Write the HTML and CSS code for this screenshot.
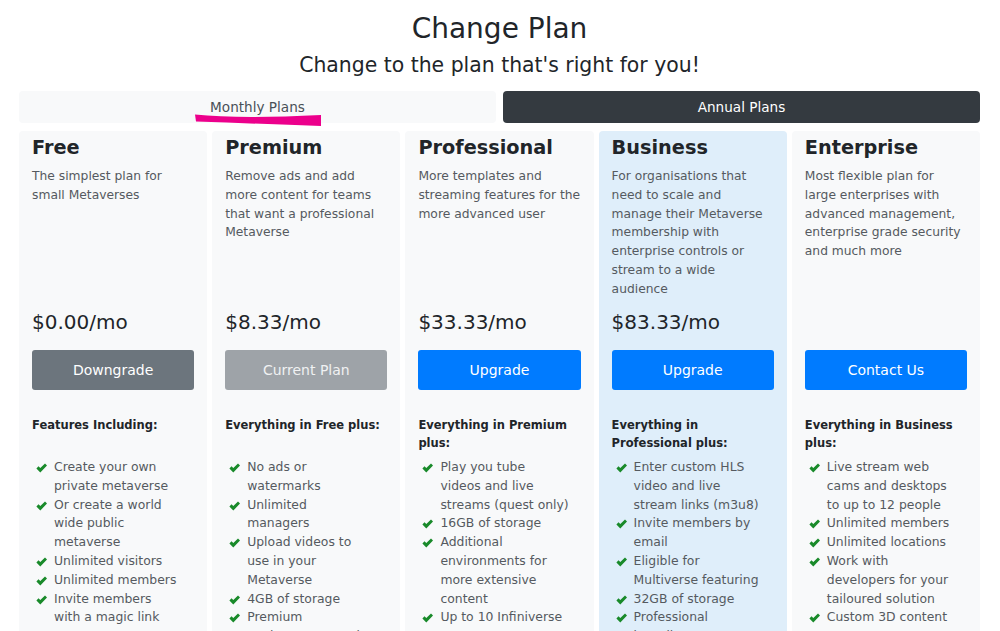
FILE: index.html
```html
<!DOCTYPE html>
<html>
<head>
<meta charset="utf-8">
<link rel="stylesheet" href="styles.css">
</head>
<body>
<div class="page">
  <h1 class="title">Change Plan</h1>
  <p class="subtitle">Change to the plan that's right for you!</p>
  <div class="tabs">
    <div class="tab tab-monthly">Monthly Plans
      <svg class="scribble" width="128" height="14" viewBox="0 0 128 14"><path d="M1,1.5 Q45,6 127,2 L127,13 Q70,11 2,8.5 Z" fill="#ec008c"/></svg>
    </div>
    <div class="tab tab-annual">Annual Plans</div>
  </div>
  <div class="cards">
    <div class="card">
      <h2 class="plan">Free</h2>
      <p class="desc">The simplest plan for<br>small Metaverses</p>
      <div class="price">$0.00/mo</div>
      <div class="btn btn-dark">Downgrade</div>
      <h3 class="feat-head">Features Including:</h3>
      <ul class="feats">
        <li>Create your own<br>private metaverse</li>
        <li>Or create a world<br>wide public<br>metaverse</li>
        <li>Unlimited visitors</li>
        <li>Unlimited members</li>
        <li>Invite members<br>with a magic link</li>
      </ul>
    </div>
    <div class="card">
      <h2 class="plan">Premium</h2>
      <p class="desc">Remove ads and add<br>more content for teams<br>that want a professional<br>Metaverse</p>
      <div class="price">$8.33/mo</div>
      <div class="btn btn-muted">Current Plan</div>
      <h3 class="feat-head">Everything in Free plus:</h3>
      <ul class="feats">
        <li>No ads or<br>watermarks</li>
        <li>Unlimited<br>managers</li>
        <li>Upload videos to<br>use in your<br>Metaverse</li>
        <li>4GB of storage</li>
        <li>Premium<br>environments and</li>
      </ul>
    </div>
    <div class="card">
      <h2 class="plan">Professional</h2>
      <p class="desc">More templates and<br>streaming features for the<br>more advanced user</p>
      <div class="price">$33.33/mo</div>
      <div class="btn btn-primary">Upgrade</div>
      <h3 class="feat-head">Everything in Premium<br>plus:</h3>
      <ul class="feats">
        <li>Play you tube<br>videos and live<br>streams (quest only)</li>
        <li>16GB of storage</li>
        <li>Additional<br>environments for<br>more extensive<br>content</li>
        <li>Up to 10 Infiniverse<br>events</li>
      </ul>
    </div>
    <div class="card card-featured">
      <h2 class="plan">Business</h2>
      <p class="desc">For organisations that<br>need to scale and<br>manage their Metaverse<br>membership with<br>enterprise controls or<br>stream to a wide<br>audience</p>
      <div class="price">$83.33/mo</div>
      <div class="btn btn-primary">Upgrade</div>
      <h3 class="feat-head">Everything in<br>Professional plus:</h3>
      <ul class="feats">
        <li>Enter custom HLS<br>video and live<br>stream links (m3u8)</li>
        <li>Invite members by<br>email</li>
        <li>Eligible for<br>Multiverse featuring</li>
        <li>32GB of storage</li>
        <li>Professional<br>branding</li>
      </ul>
    </div>
    <div class="card">
      <h2 class="plan">Enterprise</h2>
      <p class="desc">Most flexible plan for<br>large enterprises with<br>advanced management,<br>enterprise grade security<br>and much more</p>
      <div class="price"></div>
      <div class="btn btn-primary">Contact Us</div>
      <h3 class="feat-head">Everything in Business<br>plus:</h3>
      <ul class="feats">
        <li>Live stream web<br>cams and desktops<br>to up to 12 people</li>
        <li>Unlimited members</li>
        <li>Unlimited locations</li>
        <li>Work with<br>developers for your<br>tailoured solution</li>
        <li>Custom 3D content</li>
      </ul>
    </div>
  </div>
</div>
</body>
</html>
```
FILE: styles.css
```css
* { box-sizing: border-box; }
html, body { margin: 0; padding: 0; background: #fff; }
body {
  font-family: "DejaVu Sans", "Open Sans", sans-serif;
  color: #212529;
  overflow: hidden;
}
.page {
  padding: 0 20px 0 19px;
}
.title {
  margin: 0;
  padding-top: 11px;
  height: 46px;
  font-size: 28px;
  font-weight: 400;
  line-height: 36px;
  text-align: center;
}
.subtitle {
  margin: 0;
  height: 45px;
  font-size: 20.4px;
  line-height: 38px;
  text-align: center;
}
.tabs {
  display: grid;
  grid-template-columns: 1fr 1fr;
  column-gap: 7px;
  height: 32px;
}
.tab {
  border-radius: 4px;
  font-size: 13.6px;
  line-height: 32px;
  text-align: center;
}
.tab-monthly {
  position: relative;
  background: #f8f9fa;
  color: #495057;
}
.scribble {
  position: absolute;
  left: 175px;
  top: 22px;
}
.tab-annual {
  background: #343a40;
  color: #fff;
}
.cards {
  margin-top: 8px;
  display: grid;
  grid-template-columns: repeat(5, 1fr);
  column-gap: 5px;
}
.card {
  background: #f8f9fa;
  border-radius: 4px;
  padding: 4px 13px 0 13px;
  height: 520px;
}
.card-featured { background: #dfeefa; }
.plan {
  margin: 0;
  font-size: 19.3px;
  font-weight: 700;
  line-height: 25px;
}
.desc {
  margin: 7px 0 0 0;
  height: 143px;
  font-size: 12.3px;
  line-height: 18.8px;
  color: #555a60;
  white-space: nowrap;
}
.price {
  height: 25px;
  font-size: 20px;
  line-height: 25px;
  font-weight: 400;
}
.btn {
  margin-top: 14.5px;
  height: 40px;
  border-radius: 3px;
  font-size: 14px;
  line-height: 40px;
  text-align: center;
  color: #fff;
}
.btn-dark { background: #6c757d; }
.btn-muted { background: #9ea3a8; color: #f0f1f2; }
.btn-primary { background: #007bff; }
.feat-head {
  margin: 26px 0 0 0;
  height: 42.5px;
  font-size: 11.5px;
  font-weight: 700;
  line-height: 18px;
}
.feats {
  list-style: none;
  margin: 0;
  padding: 0;
  font-size: 12.4px;
  line-height: 18.8px;
  color: #555a60;
  white-space: nowrap;
}
.feats li {
  position: relative;
  padding-left: 22px;
}
.feats li::before {
  content: "";
  position: absolute;
  left: 4px;
  top: 5px;
  width: 11px;
  height: 10px;
  background: no-repeat center/contain url("data:image/svg+xml;utf8,<svg xmlns='http://www.w3.org/2000/svg' viewBox='0 0 11 10'><path d='M0.4 5.4 L2.5 3.3 L4.3 5.1 L9 0.4 L11 2.4 L4.3 9.6 Z' fill='%23198a2a'/></svg>");
}
```
